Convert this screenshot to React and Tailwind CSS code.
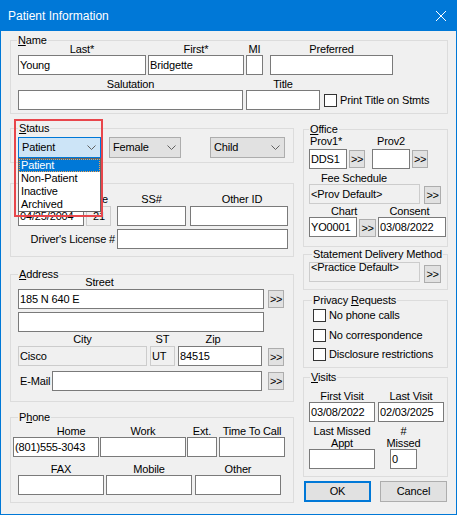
import React from 'react';

function Group({ label, left = 'left-[7px]', className = '', children }) {
  return (
    <div className={`relative shrink-0 border border-[#dcdcdc] ${className}`}>
      {label ? (
        <div className={`absolute top-[-7px] ${left} whitespace-nowrap bg-[#f0f0f0] px-px leading-[13px]`}>{label}</div>
      ) : null}
      {children}
    </div>
  );
}

function Box({ w = '', value, ro, center, className = '', lead = 'leading-[18px]' }) {
  return (
    <div
      className={`h-[20px] shrink-0 overflow-hidden whitespace-nowrap border pl-px ${lead} ${
        ro ? 'border-[#cccccc] bg-[#f0f0f0]' : 'border-[#7a7a7a] bg-white'
      } ${center ? 'text-center' : ''} ${w} ${className}`}
    >
      {value}
    </div>
  );
}

function Field({ label, w, value, ro, center, className = '', lh = 'h-[12px] leading-[12px]', labelClass = '' }) {
  return (
    <div className={`flex shrink-0 flex-col ${w} ${className}`}>
      <div className={`flex justify-center whitespace-nowrap text-center ${lh} ${labelClass}`}>
        <span>{label}</span>
      </div>
      <Box w="w-full" value={value} ro={ro} center={center} />
    </div>
  );
}

function More({ w = 'w-[16px]', className = '' }) {
  return (
    <div
      className={`flex h-[18px] shrink-0 items-center justify-center border border-[#adadad] bg-[#e1e1e1] leading-[16px] tracking-[-0.5px] ${w} ${className}`}
    >
      &gt;&gt;
    </div>
  );
}

function Chevron() {
  return (
    <svg width="9" height="5" viewBox="0 0 9 5" className="shrink-0">
      <polyline points="0.5,0.5 4.5,4.5 8.5,0.5" fill="none" stroke="#606060" strokeWidth="1" />
    </svg>
  );
}

function Combo({ w, value, focused, className = '' }) {
  return (
    <div
      className={`flex h-[21px] shrink-0 items-center justify-between border pl-[3px] pr-[4px] leading-[13px] ${
        focused ? 'border-[#0078d7] bg-[#cce4f7]' : 'border-[#adadad] bg-[#e1e1e1]'
      } ${w} ${className}`}
    >
      <span>{value}</span>
      <Chevron />
    </div>
  );
}

function Check({ label, className = '' }) {
  return (
    <div className={`flex items-center ${className}`}>
      <div className="h-[13px] w-[13px] shrink-0 border border-[#333333] bg-white" />
      <span className="ml-[3px] whitespace-nowrap leading-[13px]">{label}</span>
    </div>
  );
}

export default function App() {
  return (
    <div className="relative flex h-[515px] w-[457px] flex-col overflow-hidden border border-[#0078d7] bg-[#f0f0f0] font-['Liberation_Sans',Arial,sans-serif] text-[11px] tracking-[-0.15px] text-black">
      {/* Title bar */}
      <div className="flex h-[30px] shrink-0 items-center justify-between bg-[#0078d7] pl-[7px] pr-[10px] text-[12px] tracking-normal text-white">
        <span className="leading-[30px]">Patient Information</span>
        <svg width="10" height="10" viewBox="0 0 10 10">
          <path d="M0 0L10 10M10 0L0 10" stroke="#ffffff" strokeWidth="1" />
        </svg>
      </div>

      {/* Body */}
      <div className="flex flex-col pl-[9px] pt-[9px]">
        {/* Name */}
        <Group
          label={
            <>
              <span className="underline">N</span>ame
            </>
          }
          left="left-[6px]"
          className="h-[74px] w-[438px] pl-[7px] pt-[2px]"
        >
          <div className="flex">
            <Field label="Last*" w="w-[128px]" value="Young" />
            <Field label="First*" w="w-[96px]" value="Bridgette" className="ml-[2px]" />
            <Field label="MI" w="w-[17px]" className="ml-[2px]" />
            <Field label="Preferred" w="w-[123px]" className="ml-[7px]" />
          </div>
          <div className="mt-[3px] flex items-end">
            <Field label="Salutation" w="w-[225px]" />
            <Field label="Title" w="w-[74px]" className="ml-[3px]" />
            <Check label="Print Title on Stmts" className="mb-[3px] ml-[4px]" />
          </div>
        </Group>

        <div className="mt-[14px] flex">
          {/* Left column */}
          <div className="flex w-[284px] shrink-0 flex-col">
            <Group
              label={
                <>
                  <span className="underline">S</span>tatus
                </>
              }
              className="h-[35px] pl-[7px] pt-[8px]"
            >
              <div className="flex">
                <Combo w="w-[83px]" value="Patient" focused />
                <Combo w="w-[72px]" value="Female" className="ml-[8px]" />
                <Combo w="w-[75px]" value="Child" className="ml-[29px]" />
              </div>
            </Group>

            <Group className="mt-[20px] h-[74px] pl-[7px] pt-[9px]">
              <div className="flex">
                <Field label="" w="w-[66px]" value="04/25/2004" lh="h-[13px] leading-[13px]" />
                <Field label="Age" w="w-[25px]" value="21" ro center lh="h-[13px] leading-[13px]" className="ml-[2px]" />
                <Field label="SS#" w="w-[69px]" lh="h-[13px] leading-[13px]" className="ml-[6px]" />
                <Field label="Other ID" w="w-[98px]" lh="h-[13px] leading-[13px]" labelClass="pl-[6px]" className="ml-[4px]" />
              </div>
              <div className="mt-[3px] flex items-center">
                <div className="w-[97px] shrink-0 whitespace-nowrap text-right leading-[13px]">Driver&apos;s License #</div>
                <Box w="w-[171px]" className="ml-[2px]" />
              </div>
            </Group>

            <Group
              label={
                <>
                  <span className="underline">A</span>ddress
                </>
              }
              className="mt-[17px] h-[128px] pl-[7px] pt-[1px]"
            >
              <div className="h-[13px] w-[163px] text-center leading-[13px]">Street</div>
              <div className="flex items-center">
                <Box w="w-[246px]" value="185 N 640 E" />
                <More className="ml-[4px]" />
              </div>
              <Box w="w-[246px]" className="mt-[3px]" />
              <div className="mt-px flex items-end">
                <Field label="City" w="w-[129px]" value="Cisco" ro lh="h-[13px] leading-[13px]" />
                <Field label="ST" w="w-[25px]" value="UT" ro lh="h-[13px] leading-[13px]" className="ml-[3px]" />
                <Field label="Zip" w="w-[84px]" value="84515" lh="h-[13px] leading-[13px]" labelClass="pr-[14px]" className="ml-[3px]" />
                <More className="ml-[6px]" />
              </div>
              <div className="mt-[5px] flex items-center">
                <div className="w-[34px] shrink-0 whitespace-nowrap pl-[2px] leading-[13px]">E-Mail</div>
                <Box w="w-[210px]" />
                <More className="ml-[6px]" />
              </div>
            </Group>

            <Group
              label={
                <>
                  P<span className="underline">h</span>one
                </>
              }
              className="mt-[15px] h-[86px] pt-[7px]"
            >
              <div className="flex pl-[2px]">
                <Field label="Home" w="w-[86px]" value="(801)555-3043" labelClass="pl-[30px]" />
                <Field label="Work" w="w-[86px]" className="ml-px" />
                <Field label="Ext." w="w-[30px]" className="ml-px" />
                <Field label="Time To Call" w="w-[66px]" className="ml-[2px]" />
              </div>
              <div className="mt-[6px] flex pl-[7px]">
                <Field label="FAX" w="w-[86px]" />
                <Field label="Mobile" w="w-[86px]" className="ml-[2px]" />
                <Field label="Other" w="w-[86px]" className="ml-[3px]" />
              </div>
            </Group>
          </div>

          {/* Right column */}
          <div className="ml-[9px] flex w-[145px] shrink-0 flex-col">
            <Group
              label={
                <>
                  <span className="underline">O</span>ffice
                </>
              }
              left="left-[5px]"
              className="mt-px h-[118px] pl-[5px] pt-[5px]"
            >
              <div className="flex items-end">
                <div className="flex w-[38px] shrink-0 flex-col">
                  <div className="h-[14px] whitespace-nowrap pl-px leading-[13px]">Prov1*</div>
                  <Box w="w-full" value="DDS1" />
                </div>
                <More className="mb-px ml-[2px]" />
                <Field label="Prov2" w="w-[38px]" lh="h-[14px] leading-[13px]" className="ml-[7px]" />
                <More className="mb-px ml-[2px]" />
              </div>
              <div className="mt-[3px] h-[12px] w-[90px] whitespace-nowrap text-center leading-[12px]">Fee Schedule</div>
              <div className="flex items-end">
                <Box ro w="w-[111px]" value="<Prov Default>" />
                <More w="w-[17px]" className="ml-[4px]" />
              </div>
              <div className="mt-px flex h-[12px] leading-[12px]">
                <div className="w-[70px] shrink-0 text-center">Chart</div>
                <div className="w-[61px] shrink-0 text-center">Consent</div>
              </div>
              <div className="flex items-end">
                <Box w="w-[48px]" value="YO0001" />
                <More w="w-[17px]" className="ml-[2px]" />
                <Box w="w-[68px]" value="03/08/2022" className="ml-[2px]" />
              </div>
            </Group>

            <Group label="Statement Delivery Method" left="left-[8px]" className="mt-[7px] h-[36px] pl-[5px] pt-[7px]">
              <div className="flex items-start">
                <Box ro w="w-[111px]" value="<Practice Default>" lead="leading-[9px]" />
                <More w="w-[17px]" className="ml-[4px] mt-[3px]" />
              </div>
            </Group>

            <Group
              label={
                <>
                  Privacy <span className="underline">R</span>equests
                </>
              }
              left="left-[8px]"
              className="mt-[10px] h-[68px] pl-[9px] pt-[8px]"
            >
              <Check label="No phone calls" />
              <Check label="No correspondence" className="mt-[7px]" />
              <Check label="Disclosure restrictions" className="mt-[6px]" />
            </Group>

            <Group
              label={
                <>
                  <span className="underline">V</span>isits
                </>
              }
              left="left-[6px]"
              className="mt-[9px] h-[100px] pl-[5px] pt-[12px]"
            >
              <div className="flex">
                <Field label="First Visit" w="w-[66px]" value="03/08/2022" />
                <Field label="Last Visit" w="w-[66px]" value="02/03/2025" className="ml-[3px]" />
              </div>
              <div className="mt-[3px] flex">
                <Field
                  label={
                    <>
                      Last Missed
                      <br />
                      Appt
                    </>
                  }
                  lh="h-[24px] leading-[12px]"
                  w="w-[66px]"
                />
                <Field
                  label={
                    <>
                      #
                      <br />
                      Missed
                    </>
                  }
                  lh="h-[24px] leading-[12px]"
                  w="w-[27px]"
                  value="0"
                  className="ml-[15px]"
                />
              </div>
            </Group>

            <div className="mt-[4px] flex pl-px">
              <div className="flex h-[21px] w-[67px] items-center justify-center border-2 border-[#0078d7] bg-[#e1e1e1] leading-[13px]">
                OK
              </div>
              <div className="ml-[9px] flex h-[21px] w-[67px] items-center justify-center border border-[#adadad] bg-[#e1e1e1] leading-[13px]">
                Cancel
              </div>
            </div>
          </div>
        </div>
      </div>

      {/* Open dropdown list */}
      <div className="absolute left-[17px] top-[157px] flex h-[54px] w-[83px] flex-col border border-[#646464] bg-white">
        <div className="h-[13px] border border-dotted border-[#f7a34b] bg-[#0078d7] pl-px leading-[11px] text-white">Patient</div>
        <div className="h-[13px] pl-[2px] leading-[13px]">Non-Patient</div>
        <div className="h-[13px] pl-[2px] leading-[13px]">Inactive</div>
        <div className="h-[13px] pl-[2px] leading-[13px]">Archived</div>
      </div>

      {/* Red highlight */}
      <div className="absolute left-[13px] top-[118px] h-[98px] w-[89px] border-2 border-[#e8464b]" />
    </div>
  );
}
